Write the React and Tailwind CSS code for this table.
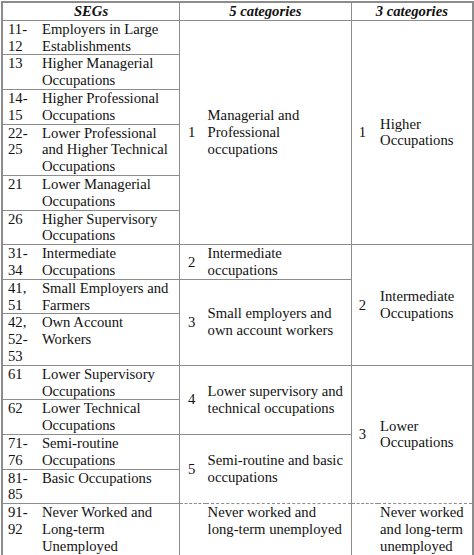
import React from 'react';

const line = 'border-[#8c8c8c]';

const segRows = [
  { code: ['11-', '12'], label: ['Employers in Large', 'Establishments'] },
  { code: ['13'], label: ['Higher Managerial', 'Occupations'] },
  { code: ['14-', '15'], label: ['Higher Professional', 'Occupations'] },
  { code: ['22-', '25'], label: ['Lower Professional', 'and Higher Technical', 'Occupations'] },
  { code: ['21'], label: ['Lower Managerial', 'Occupations'] },
  { code: ['26'], label: ['Higher Supervisory', 'Occupations'] },
  { code: ['31-', '34'], label: ['Intermediate', 'Occupations'] },
  { code: ['41,', '51'], label: ['Small Employers and', 'Farmers'] },
  { code: ['42,', '52-', '53'], label: ['Own Account', 'Workers'] },
  { code: ['61'], label: ['Lower Supervisory', 'Occupations'] },
  { code: ['62'], label: ['Lower Technical', 'Occupations'] },
  { code: ['71-', '76'], label: ['Semi-routine', 'Occupations'] },
  { code: ['81-', '85'], label: ['Basic Occupations'] },
];

// groups keyed by the SEG row index where they start
const fiveCat = {
  0: { n: '1', span: 6, text: ['Managerial and', 'Professional', 'occupations'] },
  6: { n: '2', span: 1, text: ['Intermediate', 'occupations'] },
  7: { n: '3', span: 2, text: ['Small employers and', 'own account workers'] },
  9: { n: '4', span: 2, text: ['Lower supervisory and', 'technical occupations'] },
  11: { n: '5', span: 2, text: ['Semi-routine and basic', 'occupations'], dashed: true },
};

const threeCat = {
  0: { n: '1', span: 6, text: ['Higher', 'Occupations'] },
  6: { n: '2', span: 3, text: ['Intermediate', 'Occupations'] },
  9: { n: '3', span: 4, text: ['Lower', 'Occupations'], dashed: true },
};

const Lines = ({ items }) =>
  items.map((t, i) => (
    <React.Fragment key={i}>
      {i > 0 && <br />}
      {t}
    </React.Fragment>
  ));

export default function App() {
  return (
    <div className="min-h-screen bg-white">
      <table
        className={`ml-[1px] mt-[1px] table-fixed border-collapse border-2 ${line} font-['Liberation_Serif','Times_New_Roman',serif] text-[14.7px] leading-[16.8px] text-[#111]`}
      >
        <colgroup>
          <col className="w-[39px]" />
          <col className="w-[139px]" />
          <col className="w-[26px]" />
          <col className="w-[146px]" />
          <col className="w-[27px]" />
          <col className="w-[95px]" />
        </colgroup>
        <thead>
          <tr>
            <th colSpan={2} className={`border-b border-r ${line} p-0 text-center font-bold italic`}>
              SEGs
            </th>
            <th colSpan={2} className={`border-b border-r ${line} p-0 text-center font-bold italic`}>
              5 categories
            </th>
            <th colSpan={2} className={`border-b ${line} p-0 text-center font-bold italic`}>
              3 categories
            </th>
          </tr>
        </thead>
        <tbody>
          {segRows.map((r, i) => {
            const f = fiveCat[i];
            const t = threeCat[i];
            return (
              <tr key={i}>
                <td className={`border-b ${line} p-0 pl-[5px] align-top`}>
                  <Lines items={r.code} />
                </td>
                <td className={`border-b border-r ${line} p-0 pl-[1px] align-top`}>
                  <Lines items={r.label} />
                </td>
                {f && (
                  <>
                    <td
                      rowSpan={f.span}
                      className={`border-b ${f.dashed ? 'border-dashed' : ''} ${line} p-0 pl-[8px] align-middle`}
                    >
                      {f.n}
                    </td>
                    <td
                      rowSpan={f.span}
                      className={`border-b border-r ${f.dashed ? 'border-b-dashed' : ''} ${line} p-0 pl-[2px] align-middle`}
                      style={f.dashed ? { borderBottomStyle: 'dashed', borderRightStyle: 'solid' } : undefined}
                    >
                      <Lines items={f.text} />
                    </td>
                  </>
                )}
                {t && (
                  <>
                    <td
                      rowSpan={t.span}
                      className={`border-b ${t.dashed ? 'border-dashed' : ''} ${line} p-0 pl-[7px] align-middle`}
                    >
                      {t.n}
                    </td>
                    <td
                      rowSpan={t.span}
                      className={`border-b ${t.dashed ? 'border-dashed' : ''} ${line} p-0 pl-[2px] align-middle`}
                    >
                      <Lines items={t.text} />
                    </td>
                  </>
                )}
              </tr>
            );
          })}
          <tr>
            <td className={`${line} p-0 pl-[5px] align-top`}>
              <Lines items={['91-', '92']} />
            </td>
            <td className={`border-r ${line} p-0 pl-[1px] align-top`}>
              <Lines items={['Never Worked and', 'Long-term', 'Unemployed']} />
            </td>
            <td className="p-0" />
            <td className={`border-r ${line} p-0 pl-[2px] align-top`}>
              <Lines items={['Never worked and', 'long-term unemployed']} />
            </td>
            <td className="p-0" />
            <td className="p-0 pl-[2px] align-top">
              <Lines items={['Never worked', 'and long-term', 'unemployed']} />
            </td>
          </tr>
        </tbody>
      </table>
    </div>
  );
}
